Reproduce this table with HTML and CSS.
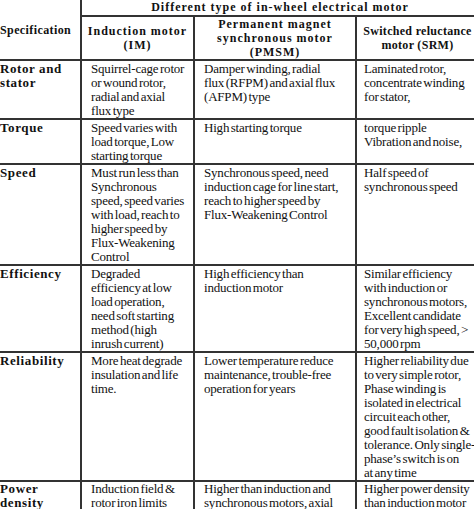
FILE: index.html
```html
<!DOCTYPE html>
<html>
<head>
<meta charset="utf-8">
<link rel="stylesheet" href="styles.css">
</head>
<body>
<table class="spec">
  <colgroup>
    <col class="c1"><col class="c2"><col class="c3"><col class="c4">
  </colgroup>
  <tr class="h1">
    <th class="lab head" rowspan="2">Specification</th>
    <th class="top" colspan="3">Different type of in-wheel electrical motor</th>
  </tr>
  <tr class="h2">
    <th class="head">Induction motor<br>(IM)</th>
    <th class="head">Permanent magnet<br>synchronous motor<br>(PMSM)</th>
    <th class="head srm">Switched reluctance<br>motor (SRM)</th>
  </tr>
  <tr class="r-rotor">
    <th class="lab">Rotor and<br>stator</th>
    <td>Squirrel-cage rotor<br>or wound rotor,<br>radial and axial<br>flux type</td>
    <td>Damper winding, radial<br>flux (RFPM) and axial flux<br>(AFPM) type</td>
    <td>Laminated rotor,<br>concentrate winding<br>for stator,</td>
  </tr>
  <tr class="r-torque">
    <th class="lab">Torque</th>
    <td>Speed varies with<br>load torque, Low<br>starting torque</td>
    <td>High starting torque</td>
    <td>torque ripple<br>Vibration and noise,</td>
  </tr>
  <tr class="r-speed">
    <th class="lab">Speed</th>
    <td>Must run less than<br>Synchronous<br>speed, speed varies<br>with load, reach to<br>higher speed by<br>Flux-Weakening<br>Control</td>
    <td>Synchronous speed, need<br>induction cage for line start,<br>reach to higher speed by<br>Flux-Weakening Control</td>
    <td>Half speed of<br>synchronous speed</td>
  </tr>
  <tr class="r-eff">
    <th class="lab">Efficiency</th>
    <td>Degraded<br>efficiency at low<br>load operation,<br>need soft starting<br>method (high<br>inrush current)</td>
    <td>High efficiency than<br>induction motor</td>
    <td>Similar efficiency<br>with induction or<br>synchronous motors,<br>Excellent candidate<br>for very high speed, &gt;<br>50,000 rpm</td>
  </tr>
  <tr class="r-rel">
    <th class="lab">Reliability</th>
    <td>More heat degrade<br>insulation and life<br>time.</td>
    <td>Lower temperature reduce<br>maintenance, trouble-free<br>operation for years</td>
    <td>Higher reliability due<br>to very simple rotor,<br>Phase winding is<br>isolated in electrical<br>circuit each other,<br>good fault isolation &amp;<br>tolerance. Only single-<br>phase’s switch is on<br>at any time</td>
  </tr>
  <tr class="r-pow">
    <th class="lab">Power<br>density</th>
    <td>Induction field &amp;<br>rotor iron limits</td>
    <td>Higher than induction and<br>synchronous motors, axial</td>
    <td>Higher power density<br>than induction motor</td>
  </tr>
</table>
</body>
</html>
```

FILE: styles.css
```css
html, body {
  margin: 0;
  padding: 0;
  background: #fff;
  overflow: hidden;
  width: 474px;
  height: 509px;
}

.spec {
  border-collapse: collapse;
  table-layout: fixed;
  width: 480px;
  margin-left: -2px;
  margin-top: 0;
  font-family: "Liberation Serif", "Times New Roman", serif;
  color: #111;
  font-size: 13px;
  line-height: 14px;
  word-spacing: -1.5px;
  letter-spacing: -0.2px;
}

.c1 { width: 83px; }
.c2 { width: 113px; }
.c3 { width: 162px; }
.c4 { width: 122px; }

.spec td, .spec th {
  border: 2px solid #333;
  vertical-align: top;
  text-align: left;
  padding: 1px 0 0 9px;
  white-space: nowrap;
  overflow: visible;
}

.spec td:last-child, .spec th:last-child {
  padding-left: 7px;
  border-right: none;
}

.spec th.lab {
  border-left: none;
  padding-left: 2px;
  font-weight: bold;
  letter-spacing: 0.6px;
  word-spacing: 0;
}

.spec th.top {
  border-top: none;
  text-align: center;
  font-weight: bold;
  font-size: 12px;
  letter-spacing: 1px;
  word-spacing: 0;
  line-height: 15px;
  padding: 0;
  vertical-align: middle;
}

.spec th.head {
  text-align: center;
  vertical-align: middle;
  font-weight: bold;
  font-size: 12px;
  line-height: 14px;
  letter-spacing: 1px;
  word-spacing: 0;
  padding: 0;
}

.spec th.head.srm {
  letter-spacing: 0.3px;
  padding: 0;
}

.spec th.lab.head {
  border-top: none;
  text-align: left;
  padding-left: 2px;
  letter-spacing: 0.4px;
}

.h1 { height: 16px; }
.h2 { height: 43px; }
.r-rotor { height: 59px; }
.r-torque { height: 42px; }
.r-speed { height: 100px; }
.r-eff { height: 87px; }
.r-rel { height: 127px; }
.r-pow { height: 40px; }

.r-pow td, .r-pow th { padding-top: 0; }
```
